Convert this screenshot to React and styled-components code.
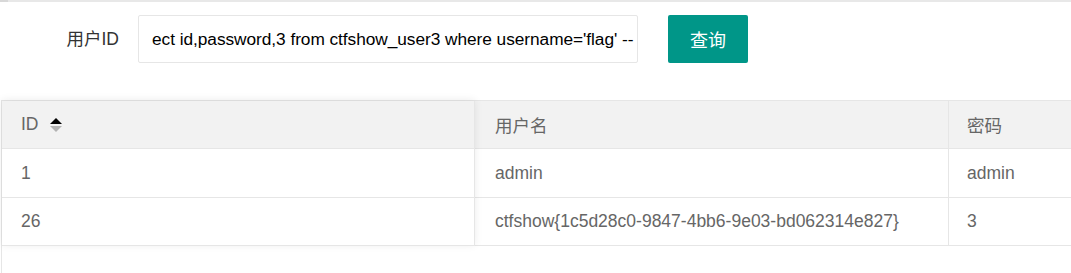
import React from "react";
import styled, { createGlobalStyle } from "styled-components";

const GlobalStyle = createGlobalStyle`
  html, body { margin: 0; padding: 0; background: #fff; }
  body {
    font-family: "Liberation Sans", Arial, "Noto Sans CJK SC", sans-serif;
    font-size: 17.5px;
    color: #666;
    overflow: hidden;
  }
`;

const Page = styled.div`
  width: 1071px;
  height: 273px;
  overflow: hidden;
`;

const TopRule = styled.div`
  height: 2px;
  background: linear-gradient(to right, #d8d8d8 0 8px, #e8e8e8 8px);
`;

const Form = styled.div`
  display: flex;
  align-items: center;
  margin-top: 13px;
  height: 48px;
`;

const Label = styled.label`
  width: 119px;
  padding-right: 19px;
  text-align: right;
  color: #333;
  line-height: 48px;
`;

const InputBox = styled.div`
  box-sizing: border-box;
  width: 500px;
  height: 48px;
  border: 1px solid #e6e6e6;
  border-radius: 2px;
  padding-left: 13px;
  display: flex;
  align-items: center;
  overflow: hidden;
  white-space: nowrap;
  color: #000;
  font-size: 17.3px;
  letter-spacing: -0.05px;
`;

const Button = styled.button`
  margin-left: 30px;
  width: 80px;
  height: 48px;
  border: none;
  border-radius: 2px;
  background: #009688;
  color: #fff;
  font-size: 18px;
  font-family: "Noto Sans CJK SC", sans-serif;
  padding: 0;
`;

const Table = styled.div`
  margin-top: 37px;
  margin-left: 1px;
  height: 200px;
  border-left: 1px solid #e6e6e6;
  border-top: 1px solid #e6e6e6;
  display: flex;
  align-items: flex-start;
`;

const FixedCol = styled.div`
  position: relative;
  z-index: 1;
  width: 473px;
  flex: none;
  background: #fff;
  box-shadow: 0 -1px 8px rgba(0, 0, 0, 0.08);
`;

const MainCols = styled.div`
  flex: 1;
`;

const Row = styled.div`
  display: flex;
  height: ${(p) => p.$h}px;
  border-bottom: 1px solid #e6e6e6;
  background: ${(p) => (p.$head ? "#f2f2f2" : "#fff")};
`;

const Cell = styled.div`
  box-sizing: border-box;
  display: flex;
  align-items: center;
  padding-left: ${(p) => p.$pad || 19}px;
  width: ${(p) => (p.$w ? `${p.$w}px` : "auto")};
  flex: ${(p) => (p.$w ? "none" : "1")};
  border-right: ${(p) => (p.$border ? "1px solid #e6e6e6" : "none")};
  color: #666;
  white-space: nowrap;
`;

const Sort = styled.span`
  display: inline-flex;
  flex-direction: column;
  align-items: center;
  gap: 2px;
  margin-left: 11px;
`;

const Tri = styled.span`
  width: 0;
  height: 0;
  border-left: 6px solid transparent;
  border-right: 6px solid transparent;
  ${(p) =>
    p.$up
      ? "border-bottom: 6px solid #000;"
      : "border-top: 6px solid #b2b2b2;"}
`;

const rows = [
  { id: "1", name: "admin", pass: "admin", h: 48 },
  { id: "26", name: "ctfshow{1c5d28c0-9847-4bb6-9e03-bd062314e827}", pass: "3", h: 47 },
];

export default function App() {
  return (
    <Page>
      <GlobalStyle />
      <TopRule />
      <Form>
        <Label>用户ID</Label>
        <InputBox>ect id,password,3 from ctfshow_user3 where username='flag' --</InputBox>
        <Button>查询</Button>
      </Form>
      <Table>
        <FixedCol>
          <Row $head $h={47}>
            <Cell $w={473} $border>
              ID
              <Sort>
                <Tri $up />
                <Tri />
              </Sort>
            </Cell>
          </Row>
          {rows.map((r) => (
            <Row key={r.id} $h={r.h}>
              <Cell $w={473} $border>{r.id}</Cell>
            </Row>
          ))}
        </FixedCol>
        <MainCols>
          <Row $head $h={47}>
            <Cell $w={474} $border $pad={20}>用户名</Cell>
            <Cell $pad={18}>密码</Cell>
          </Row>
          {rows.map((r) => (
            <Row key={r.id} $h={r.h}>
              <Cell $w={474} $border $pad={20}>{r.name}</Cell>
              <Cell $pad={18}>{r.pass}</Cell>
            </Row>
          ))}
        </MainCols>
      </Table>
    </Page>
  );
}
